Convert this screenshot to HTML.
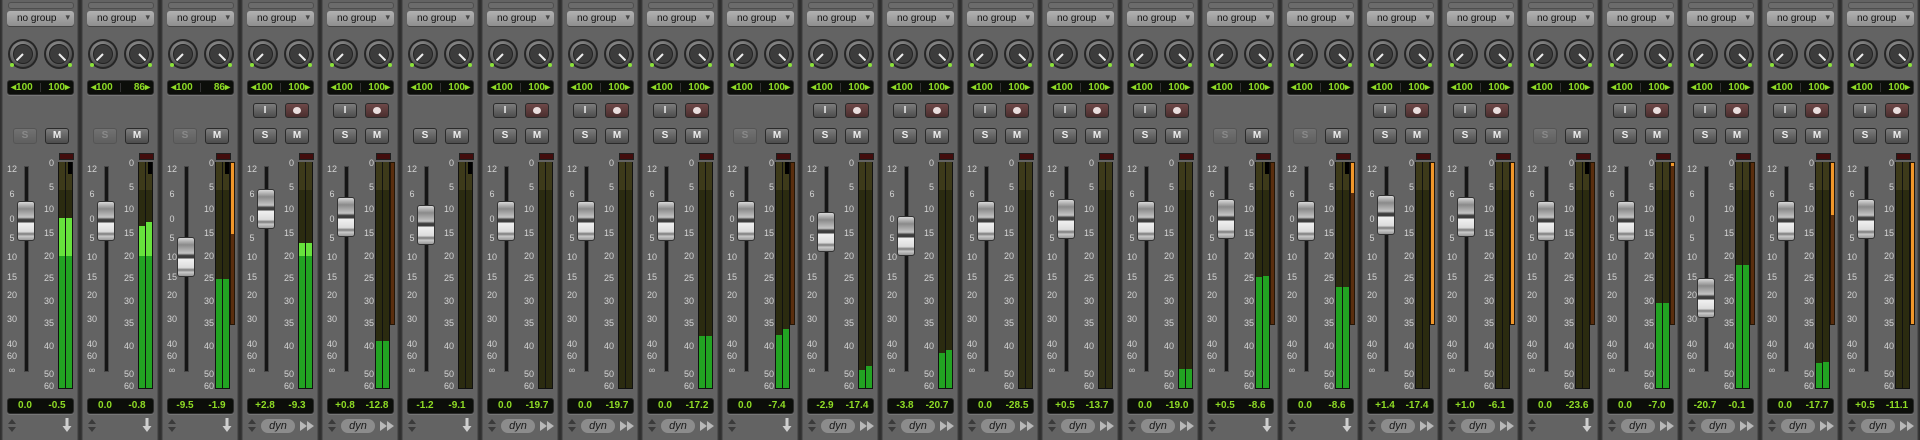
<!DOCTYPE html>
<html><head><meta charset="utf-8"><style>
body{margin:0;width:1920px;height:440px;background:#333;position:relative;overflow:hidden;font-family:"Liberation Sans",sans-serif}
.s{position:absolute;top:0;width:80px;height:440px;background:linear-gradient(to right,#2c2c2c 0,#3c3c3c 2px,#636363 3px,#636363 77px,#3c3c3c 78px,#2c2c2c 80px)}
.s *{position:absolute;display:block;text-decoration:none}
.tb{left:8px;top:2px;width:64px;height:5px;background:#6b6b6b;border:1px solid #4e4e4e;border-radius:3px}
.g{left:7px;top:11px;width:67px;height:15px;background:linear-gradient(#b2b2b2,#8e8e8e);border-radius:3px;font-size:10px;line-height:15px;color:#111;text-indent:10px;box-shadow:0 1px 0 #444}
.g span{right:4px;top:-1px;font-size:9px;color:#444;text-indent:0}
.k1{left:5px;top:36px;width:36px;height:36px}.k2{left:41px;top:36px;width:36px;height:36px}
.pd,.bd{left:7px;width:65px;height:13px;background:#0c0e0a;border:1px solid #2c2c2c;border-radius:3px;color:#8fdc25;font-size:10px;font-weight:bold;line-height:13px;box-shadow:0 1px 0 #777}
.pd{top:80px}.bd{top:398px;height:14px;line-height:14px}
.pd .pl{left:3px;top:0}.pd .pr{right:3px;top:0}.pd i{left:32px;top:2px;width:1px;height:9px;background:#333}
.bd .pl{left:0;top:0;width:34px;text-align:center}.bd .pr{left:33px;top:0;width:32px;text-align:center}
.bt{width:22px;height:13px;border:1px solid #2a2a2a;border-radius:3px;background:linear-gradient(#7c7c7c,#4c4c4c);color:#eee;font-size:10px;font-weight:bold;text-align:center;line-height:13px}
.bi{left:13px;top:103px}.br{left:45px;top:103px;background:linear-gradient(#6e4848,#4a2e2e)}
.br i{left:7px;top:3px;width:8px;height:7px;border-radius:50%;background:#eadede}
.bs{left:13px;top:128px;height:14px;line-height:14px}.bm{left:45px;top:128px;height:14px;line-height:14px}
.dm{background:linear-gradient(#727272,#5f5f5f);color:#8a8a8a;border-color:#555}
.ls b,.ms b{font-size:9px;color:#d4d4d4;font-weight:normal;height:10px;line-height:10px}
.ls b{left:5px;width:14px;text-align:center}
.ms b{left:36px;width:18px;text-align:right}
.ls b:nth-child(1){top:164px}.ls b:nth-child(2){top:189px}.ls b:nth-child(3){top:214px}.ls b:nth-child(4){top:233px}.ls b:nth-child(5){top:252px}.ls b:nth-child(6){top:272px}.ls b:nth-child(7){top:290px}.ls b:nth-child(8){top:314px}.ls b:nth-child(9){top:339px}.ls b:nth-child(10){top:351px}.ls b:nth-child(11){top:365px}
.ms b:nth-child(1){top:158px}.ms b:nth-child(2){top:182px}.ms b:nth-child(3){top:204px}.ms b:nth-child(4){top:228px}.ms b:nth-child(5){top:251px}.ms b:nth-child(6){top:273px}.ms b:nth-child(7){top:296px}.ms b:nth-child(8){top:318px}.ms b:nth-child(9){top:341px}.ms b:nth-child(10){top:369px}.ms b:nth-child(11){top:381px}
.tr{left:24px;top:166px;width:3px;height:204px;background:#151515;border:1px solid #474747}
.cap{left:17px;width:16px;height:38px;border:1px solid #333;border-radius:3px;background:linear-gradient(#d8d8d8,#8a8a8a 18%,#c4c4c4 40%,#3e3e3e 46%,#3e3e3e 52%,#f0f0f0 56%,#dcdcdc 78%,#7a7a7a 84%,#c8c8c8 90%,#999 100%)}
.cl{left:59px;top:153px;width:13px;height:5px;background:#420d0d;border:1px solid #1e1e1e}
.t .cl{left:56px}
.ch{top:162px;height:226px;width:6px;background:linear-gradient(#3d3a1a 0,#3d3a1a 28px,#2b2b10 28px);border-left:1px solid #111;border-bottom:1px solid #111;overflow:hidden}
.a{left:58px}.b{left:65px;border-right:1px solid #111}
.t .a{left:55px}.t .b{left:62px}
.ch u{left:0;right:0;bottom:0;background:#22a322}
.ch s{right:0;top:0;width:4px;height:12px;background:#000}
.oc{left:70px;top:162px;width:3px;height:161px;border:1px solid #241606;background:#5a2e0e}
.up{left:8px;top:419px;width:0;height:0;border-left:4px solid transparent;border-right:4px solid transparent;border-bottom:5px solid #3a3a3a}
.dn{left:8px;top:427px;width:0;height:0;border-left:4px solid transparent;border-right:4px solid transparent;border-top:5px solid #3a3a3a}
.ar{left:62px;top:417px;width:10px;height:16px}
.dy{left:21px;top:419px;width:34px;height:14px;border-radius:7px;background:#8c8c8c;color:#1a1a1a;font-size:11px;line-height:14px;text-align:center}
.ff{left:60px;top:421px;width:14px;height:10px}
</style></head><body>
<svg width="0" height="0" style="position:absolute">
<defs>
<radialGradient id="kg" cx="40%" cy="30%" r="70%"><stop offset="0" stop-color="#9a9a9a"/><stop offset="1" stop-color="#4a4a4a"/></radialGradient>
<symbol id="kn" viewBox="0 0 36 36"><circle cx="18" cy="18" r="15" fill="#262626"/><circle cx="18" cy="18" r="13" fill="url(#kg)"/><circle cx="18" cy="18" r="9.5" fill="#3c3c3c" stroke="#222"/><line x1="18" y1="18" x2="11.5" y2="24.5" stroke="#eee" stroke-width="2"/><circle cx="7" cy="29" r="2" fill="#8be33a"/></symbol>
<symbol id="kr" viewBox="0 0 36 36"><circle cx="18" cy="18" r="15" fill="#262626"/><circle cx="18" cy="18" r="13" fill="url(#kg)"/><circle cx="18" cy="18" r="9.5" fill="#3c3c3c" stroke="#222"/><line x1="18" y1="18" x2="24.5" y2="24.5" stroke="#eee" stroke-width="2"/><circle cx="29" cy="29" r="2" fill="#8be33a"/></symbol>
<symbol id="da" viewBox="0 0 10 16"><path d="M3.5 1h3v8h3L5 15 .5 9h3z" fill="#cfcfcf"/></symbol>
<symbol id="fw" viewBox="0 0 14 10"><path d="M0 0l7 5-7 5zM7 0l7 5-7 5z" fill="#b8b8b8"/></symbol>
</defs></svg>

<!-- 1 -->
<div class="s" style="left:0px"><i class="tb"></i><div class="g">no group<span>▾</span></div><svg class="k1"><use href="#kn"/></svg><svg class="k2"><use href="#kr"/></svg><div class="pd"><span class="pl">◂100</span><i></i><span class="pr">100▸</span></div><div class="bt bs dm">S</div><div class="bt bm">M</div><div class="ls"><b>12</b><b>6</b><b>0</b><b>5</b><b>10</b><b>15</b><b>20</b><b>30</b><b>40</b><b>60</b><b>∞</b></div><div class="ms"><b>0</b><b>5</b><b>10</b><b>15</b><b>20</b><b>25</b><b>30</b><b>35</b><b>40</b><b>50</b><b>60</b></div><i class="tr"></i><i class="cap" style="top:201px"></i><i class="cl"></i><i class="ch a"><u style="top:56px;background:linear-gradient(#66e23c 0 38px,#22a322 38px)"></u></i><i class="ch b"><u style="top:56px;background:linear-gradient(#66e23c 0 38px,#22a322 38px)"></u><s></s></i><div class="bd"><span class="pl">0.0</span><span class="pr">-0.5</span></div><i class="up"></i><i class="dn"></i><svg class="ar"><use href="#da"/></svg></div>
<!-- 2 -->
<div class="s" style="left:80px"><i class="tb"></i><div class="g">no group<span>▾</span></div><svg class="k1"><use href="#kn"/></svg><svg class="k2"><use href="#kr"/></svg><div class="pd"><span class="pl">◂100</span><i></i><span class="pr">86▸</span></div><div class="bt bs dm">S</div><div class="bt bm">M</div><div class="ls"><b>12</b><b>6</b><b>0</b><b>5</b><b>10</b><b>15</b><b>20</b><b>30</b><b>40</b><b>60</b><b>∞</b></div><div class="ms"><b>0</b><b>5</b><b>10</b><b>15</b><b>20</b><b>25</b><b>30</b><b>35</b><b>40</b><b>50</b><b>60</b></div><i class="tr"></i><i class="cap" style="top:201px"></i><i class="cl"></i><i class="ch a"><u style="top:64px;background:linear-gradient(#66e23c 0 30px,#22a322 30px)"></u></i><i class="ch b"><u style="top:60px;background:linear-gradient(#66e23c 0 34px,#22a322 34px)"></u><s></s></i><div class="bd"><span class="pl">0.0</span><span class="pr">-0.8</span></div><i class="up"></i><i class="dn"></i><svg class="ar"><use href="#da"/></svg></div>
<!-- 3 -->
<div class="s t" style="left:160px"><i class="tb"></i><div class="g">no group<span>▾</span></div><svg class="k1"><use href="#kn"/></svg><svg class="k2"><use href="#kr"/></svg><div class="pd"><span class="pl">◂100</span><i></i><span class="pr">86▸</span></div><div class="bt bs dm">S</div><div class="bt bm">M</div><div class="ls"><b>12</b><b>6</b><b>0</b><b>5</b><b>10</b><b>15</b><b>20</b><b>30</b><b>40</b><b>60</b><b>∞</b></div><div class="ms"><b>0</b><b>5</b><b>10</b><b>15</b><b>20</b><b>25</b><b>30</b><b>35</b><b>40</b><b>50</b><b>60</b></div><i class="tr"></i><i class="cap" style="top:237px"></i><i class="cl"></i><i class="ch a"><u style="top:117px"></u></i><i class="ch b"><u style="top:117px"></u><s></s></i><i class="oc" style="background:linear-gradient(#f0962a 0 71px,#5a2e0e 71px)"></i><div class="bd"><span class="pl">-9.5</span><span class="pr">-1.9</span></div><i class="up"></i><i class="dn"></i><svg class="ar"><use href="#da"/></svg></div>
<!-- 4 -->
<div class="s" style="left:240px"><i class="tb"></i><div class="g">no group<span>▾</span></div><svg class="k1"><use href="#kn"/></svg><svg class="k2"><use href="#kr"/></svg><div class="pd"><span class="pl">◂100</span><i></i><span class="pr">100▸</span></div><div class="bt bi">I</div><div class="bt br"><i></i></div><div class="bt bs">S</div><div class="bt bm">M</div><div class="ls"><b>12</b><b>6</b><b>0</b><b>5</b><b>10</b><b>15</b><b>20</b><b>30</b><b>40</b><b>60</b><b>∞</b></div><div class="ms"><b>0</b><b>5</b><b>10</b><b>15</b><b>20</b><b>25</b><b>30</b><b>35</b><b>40</b><b>50</b><b>60</b></div><i class="tr"></i><i class="cap" style="top:189px"></i><i class="cl"></i><i class="ch a"><u style="top:81px;background:linear-gradient(#66e23c 0 13px,#22a322 13px)"></u></i><i class="ch b"><u style="top:81px;background:linear-gradient(#66e23c 0 13px,#22a322 13px)"></u></i><div class="bd"><span class="pl">+2.8</span><span class="pr">-9.3</span></div><i class="up"></i><i class="dn"></i><i class="dy">dyn</i><svg class="ff"><use href="#fw"/></svg></div>
<!-- 5 -->
<div class="s t" style="left:320px"><i class="tb"></i><div class="g">no group<span>▾</span></div><svg class="k1"><use href="#kn"/></svg><svg class="k2"><use href="#kr"/></svg><div class="pd"><span class="pl">◂100</span><i></i><span class="pr">100▸</span></div><div class="bt bi">I</div><div class="bt br"><i></i></div><div class="bt bs">S</div><div class="bt bm">M</div><div class="ls"><b>12</b><b>6</b><b>0</b><b>5</b><b>10</b><b>15</b><b>20</b><b>30</b><b>40</b><b>60</b><b>∞</b></div><div class="ms"><b>0</b><b>5</b><b>10</b><b>15</b><b>20</b><b>25</b><b>30</b><b>35</b><b>40</b><b>50</b><b>60</b></div><i class="tr"></i><i class="cap" style="top:197px"></i><i class="cl"></i><i class="ch a"><u style="top:179px"></u></i><i class="ch b"><u style="top:179px"></u></i><i class="oc"></i><div class="bd"><span class="pl">+0.8</span><span class="pr">-12.8</span></div><i class="up"></i><i class="dn"></i><i class="dy">dyn</i><svg class="ff"><use href="#fw"/></svg></div>
<!-- 6 -->
<div class="s" style="left:400px"><i class="tb"></i><div class="g">no group<span>▾</span></div><svg class="k1"><use href="#kn"/></svg><svg class="k2"><use href="#kr"/></svg><div class="pd"><span class="pl">◂100</span><i></i><span class="pr">100▸</span></div><div class="bt bs">S</div><div class="bt bm">M</div><div class="ls"><b>12</b><b>6</b><b>0</b><b>5</b><b>10</b><b>15</b><b>20</b><b>30</b><b>40</b><b>60</b><b>∞</b></div><div class="ms"><b>0</b><b>5</b><b>10</b><b>15</b><b>20</b><b>25</b><b>30</b><b>35</b><b>40</b><b>50</b><b>60</b></div><i class="tr"></i><i class="cap" style="top:205px"></i><i class="cl"></i><i class="ch a"></i><i class="ch b"><s></s></i><div class="bd"><span class="pl">-1.2</span><span class="pr">-9.1</span></div><i class="up"></i><i class="dn"></i><svg class="ar"><use href="#da"/></svg></div>
<!-- 7 -->
<div class="s" style="left:480px"><i class="tb"></i><div class="g">no group<span>▾</span></div><svg class="k1"><use href="#kn"/></svg><svg class="k2"><use href="#kr"/></svg><div class="pd"><span class="pl">◂100</span><i></i><span class="pr">100▸</span></div><div class="bt bi">I</div><div class="bt br"><i></i></div><div class="bt bs">S</div><div class="bt bm">M</div><div class="ls"><b>12</b><b>6</b><b>0</b><b>5</b><b>10</b><b>15</b><b>20</b><b>30</b><b>40</b><b>60</b><b>∞</b></div><div class="ms"><b>0</b><b>5</b><b>10</b><b>15</b><b>20</b><b>25</b><b>30</b><b>35</b><b>40</b><b>50</b><b>60</b></div><i class="tr"></i><i class="cap" style="top:201px"></i><i class="cl"></i><i class="ch a"></i><i class="ch b"></i><div class="bd"><span class="pl">0.0</span><span class="pr">-19.7</span></div><i class="up"></i><i class="dn"></i><i class="dy">dyn</i><svg class="ff"><use href="#fw"/></svg></div>
<!-- 8 -->
<div class="s" style="left:560px"><i class="tb"></i><div class="g">no group<span>▾</span></div><svg class="k1"><use href="#kn"/></svg><svg class="k2"><use href="#kr"/></svg><div class="pd"><span class="pl">◂100</span><i></i><span class="pr">100▸</span></div><div class="bt bi">I</div><div class="bt br"><i></i></div><div class="bt bs">S</div><div class="bt bm">M</div><div class="ls"><b>12</b><b>6</b><b>0</b><b>5</b><b>10</b><b>15</b><b>20</b><b>30</b><b>40</b><b>60</b><b>∞</b></div><div class="ms"><b>0</b><b>5</b><b>10</b><b>15</b><b>20</b><b>25</b><b>30</b><b>35</b><b>40</b><b>50</b><b>60</b></div><i class="tr"></i><i class="cap" style="top:201px"></i><i class="cl"></i><i class="ch a"></i><i class="ch b"></i><div class="bd"><span class="pl">0.0</span><span class="pr">-19.7</span></div><i class="up"></i><i class="dn"></i><i class="dy">dyn</i><svg class="ff"><use href="#fw"/></svg></div>
<!-- 9 -->
<div class="s" style="left:640px"><i class="tb"></i><div class="g">no group<span>▾</span></div><svg class="k1"><use href="#kn"/></svg><svg class="k2"><use href="#kr"/></svg><div class="pd"><span class="pl">◂100</span><i></i><span class="pr">100▸</span></div><div class="bt bi">I</div><div class="bt br"><i></i></div><div class="bt bs">S</div><div class="bt bm">M</div><div class="ls"><b>12</b><b>6</b><b>0</b><b>5</b><b>10</b><b>15</b><b>20</b><b>30</b><b>40</b><b>60</b><b>∞</b></div><div class="ms"><b>0</b><b>5</b><b>10</b><b>15</b><b>20</b><b>25</b><b>30</b><b>35</b><b>40</b><b>50</b><b>60</b></div><i class="tr"></i><i class="cap" style="top:201px"></i><i class="cl"></i><i class="ch a"><u style="top:174px"></u></i><i class="ch b"><u style="top:174px"></u></i><div class="bd"><span class="pl">0.0</span><span class="pr">-17.2</span></div><i class="up"></i><i class="dn"></i><i class="dy">dyn</i><svg class="ff"><use href="#fw"/></svg></div>
<!-- 10 -->
<div class="s t" style="left:720px"><i class="tb"></i><div class="g">no group<span>▾</span></div><svg class="k1"><use href="#kn"/></svg><svg class="k2"><use href="#kr"/></svg><div class="pd"><span class="pl">◂100</span><i></i><span class="pr">100▸</span></div><div class="bt bs dm">S</div><div class="bt bm">M</div><div class="ls"><b>12</b><b>6</b><b>0</b><b>5</b><b>10</b><b>15</b><b>20</b><b>30</b><b>40</b><b>60</b><b>∞</b></div><div class="ms"><b>0</b><b>5</b><b>10</b><b>15</b><b>20</b><b>25</b><b>30</b><b>35</b><b>40</b><b>50</b><b>60</b></div><i class="tr"></i><i class="cap" style="top:201px"></i><i class="cl"></i><i class="ch a"><u style="top:173px"></u></i><i class="ch b"><u style="top:167px"></u><s></s></i><i class="oc"></i><div class="bd"><span class="pl">0.0</span><span class="pr">-7.4</span></div><i class="up"></i><i class="dn"></i><svg class="ar"><use href="#da"/></svg></div>
<!-- 11 -->
<div class="s" style="left:800px"><i class="tb"></i><div class="g">no group<span>▾</span></div><svg class="k1"><use href="#kn"/></svg><svg class="k2"><use href="#kr"/></svg><div class="pd"><span class="pl">◂100</span><i></i><span class="pr">100▸</span></div><div class="bt bi">I</div><div class="bt br"><i></i></div><div class="bt bs">S</div><div class="bt bm">M</div><div class="ls"><b>12</b><b>6</b><b>0</b><b>5</b><b>10</b><b>15</b><b>20</b><b>30</b><b>40</b><b>60</b><b>∞</b></div><div class="ms"><b>0</b><b>5</b><b>10</b><b>15</b><b>20</b><b>25</b><b>30</b><b>35</b><b>40</b><b>50</b><b>60</b></div><i class="tr"></i><i class="cap" style="top:212px"></i><i class="cl"></i><i class="ch a"><u style="top:208px"></u></i><i class="ch b"><u style="top:204px"></u></i><div class="bd"><span class="pl">-2.9</span><span class="pr">-17.4</span></div><i class="up"></i><i class="dn"></i><i class="dy">dyn</i><svg class="ff"><use href="#fw"/></svg></div>
<!-- 12 -->
<div class="s" style="left:880px"><i class="tb"></i><div class="g">no group<span>▾</span></div><svg class="k1"><use href="#kn"/></svg><svg class="k2"><use href="#kr"/></svg><div class="pd"><span class="pl">◂100</span><i></i><span class="pr">100▸</span></div><div class="bt bi">I</div><div class="bt br"><i></i></div><div class="bt bs">S</div><div class="bt bm">M</div><div class="ls"><b>12</b><b>6</b><b>0</b><b>5</b><b>10</b><b>15</b><b>20</b><b>30</b><b>40</b><b>60</b><b>∞</b></div><div class="ms"><b>0</b><b>5</b><b>10</b><b>15</b><b>20</b><b>25</b><b>30</b><b>35</b><b>40</b><b>50</b><b>60</b></div><i class="tr"></i><i class="cap" style="top:216px"></i><i class="cl"></i><i class="ch a"><u style="top:191px"></u></i><i class="ch b"><u style="top:188px"></u></i><div class="bd"><span class="pl">-3.8</span><span class="pr">-20.7</span></div><i class="up"></i><i class="dn"></i><i class="dy">dyn</i><svg class="ff"><use href="#fw"/></svg></div>
<!-- 13 -->
<div class="s" style="left:960px"><i class="tb"></i><div class="g">no group<span>▾</span></div><svg class="k1"><use href="#kn"/></svg><svg class="k2"><use href="#kr"/></svg><div class="pd"><span class="pl">◂100</span><i></i><span class="pr">100▸</span></div><div class="bt bi">I</div><div class="bt br"><i></i></div><div class="bt bs">S</div><div class="bt bm">M</div><div class="ls"><b>12</b><b>6</b><b>0</b><b>5</b><b>10</b><b>15</b><b>20</b><b>30</b><b>40</b><b>60</b><b>∞</b></div><div class="ms"><b>0</b><b>5</b><b>10</b><b>15</b><b>20</b><b>25</b><b>30</b><b>35</b><b>40</b><b>50</b><b>60</b></div><i class="tr"></i><i class="cap" style="top:201px"></i><i class="cl"></i><i class="ch a"></i><i class="ch b"></i><div class="bd"><span class="pl">0.0</span><span class="pr">-28.5</span></div><i class="up"></i><i class="dn"></i><i class="dy">dyn</i><svg class="ff"><use href="#fw"/></svg></div>
<!-- 14 -->
<div class="s" style="left:1040px"><i class="tb"></i><div class="g">no group<span>▾</span></div><svg class="k1"><use href="#kn"/></svg><svg class="k2"><use href="#kr"/></svg><div class="pd"><span class="pl">◂100</span><i></i><span class="pr">100▸</span></div><div class="bt bi">I</div><div class="bt br"><i></i></div><div class="bt bs">S</div><div class="bt bm">M</div><div class="ls"><b>12</b><b>6</b><b>0</b><b>5</b><b>10</b><b>15</b><b>20</b><b>30</b><b>40</b><b>60</b><b>∞</b></div><div class="ms"><b>0</b><b>5</b><b>10</b><b>15</b><b>20</b><b>25</b><b>30</b><b>35</b><b>40</b><b>50</b><b>60</b></div><i class="tr"></i><i class="cap" style="top:199px"></i><i class="cl"></i><i class="ch a"></i><i class="ch b"></i><div class="bd"><span class="pl">+0.5</span><span class="pr">-13.7</span></div><i class="up"></i><i class="dn"></i><i class="dy">dyn</i><svg class="ff"><use href="#fw"/></svg></div>
<!-- 15 -->
<div class="s" style="left:1120px"><i class="tb"></i><div class="g">no group<span>▾</span></div><svg class="k1"><use href="#kn"/></svg><svg class="k2"><use href="#kr"/></svg><div class="pd"><span class="pl">◂100</span><i></i><span class="pr">100▸</span></div><div class="bt bi">I</div><div class="bt br"><i></i></div><div class="bt bs">S</div><div class="bt bm">M</div><div class="ls"><b>12</b><b>6</b><b>0</b><b>5</b><b>10</b><b>15</b><b>20</b><b>30</b><b>40</b><b>60</b><b>∞</b></div><div class="ms"><b>0</b><b>5</b><b>10</b><b>15</b><b>20</b><b>25</b><b>30</b><b>35</b><b>40</b><b>50</b><b>60</b></div><i class="tr"></i><i class="cap" style="top:201px"></i><i class="cl"></i><i class="ch a"><u style="top:207px"></u></i><i class="ch b"><u style="top:207px"></u></i><div class="bd"><span class="pl">0.0</span><span class="pr">-19.0</span></div><i class="up"></i><i class="dn"></i><i class="dy">dyn</i><svg class="ff"><use href="#fw"/></svg></div>
<!-- 16 -->
<div class="s t" style="left:1200px"><i class="tb"></i><div class="g">no group<span>▾</span></div><svg class="k1"><use href="#kn"/></svg><svg class="k2"><use href="#kr"/></svg><div class="pd"><span class="pl">◂100</span><i></i><span class="pr">100▸</span></div><div class="bt bs dm">S</div><div class="bt bm">M</div><div class="ls"><b>12</b><b>6</b><b>0</b><b>5</b><b>10</b><b>15</b><b>20</b><b>30</b><b>40</b><b>60</b><b>∞</b></div><div class="ms"><b>0</b><b>5</b><b>10</b><b>15</b><b>20</b><b>25</b><b>30</b><b>35</b><b>40</b><b>50</b><b>60</b></div><i class="tr"></i><i class="cap" style="top:199px"></i><i class="cl"></i><i class="ch a"><u style="top:115px"></u></i><i class="ch b"><u style="top:114px"></u><s></s></i><i class="oc"></i><div class="bd"><span class="pl">+0.5</span><span class="pr">-8.6</span></div><i class="up"></i><i class="dn"></i><svg class="ar"><use href="#da"/></svg></div>
<!-- 17 -->
<div class="s t" style="left:1280px"><i class="tb"></i><div class="g">no group<span>▾</span></div><svg class="k1"><use href="#kn"/></svg><svg class="k2"><use href="#kr"/></svg><div class="pd"><span class="pl">◂100</span><i></i><span class="pr">100▸</span></div><div class="bt bs dm">S</div><div class="bt bm">M</div><div class="ls"><b>12</b><b>6</b><b>0</b><b>5</b><b>10</b><b>15</b><b>20</b><b>30</b><b>40</b><b>60</b><b>∞</b></div><div class="ms"><b>0</b><b>5</b><b>10</b><b>15</b><b>20</b><b>25</b><b>30</b><b>35</b><b>40</b><b>50</b><b>60</b></div><i class="tr"></i><i class="cap" style="top:201px"></i><i class="cl"></i><i class="ch a"><u style="top:125px"></u></i><i class="ch b"><u style="top:125px"></u><s></s></i><i class="oc" style="background:linear-gradient(#f0962a 0 30px,#5a2e0e 30px)"></i><div class="bd"><span class="pl">0.0</span><span class="pr">-8.6</span></div><i class="up"></i><i class="dn"></i><svg class="ar"><use href="#da"/></svg></div>
<!-- 18 -->
<div class="s t" style="left:1360px"><i class="tb"></i><div class="g">no group<span>▾</span></div><svg class="k1"><use href="#kn"/></svg><svg class="k2"><use href="#kr"/></svg><div class="pd"><span class="pl">◂100</span><i></i><span class="pr">100▸</span></div><div class="bt bi">I</div><div class="bt br"><i></i></div><div class="bt bs">S</div><div class="bt bm">M</div><div class="ls"><b>12</b><b>6</b><b>0</b><b>5</b><b>10</b><b>15</b><b>20</b><b>30</b><b>40</b><b>60</b><b>∞</b></div><div class="ms"><b>0</b><b>5</b><b>10</b><b>15</b><b>20</b><b>25</b><b>30</b><b>35</b><b>40</b><b>50</b><b>60</b></div><i class="tr"></i><i class="cap" style="top:195px"></i><i class="cl"></i><i class="ch a"></i><i class="ch b"></i><i class="oc" style="background:#f0962a"></i><div class="bd"><span class="pl">+1.4</span><span class="pr">-17.4</span></div><i class="up"></i><i class="dn"></i><i class="dy">dyn</i><svg class="ff"><use href="#fw"/></svg></div>
<!-- 19 -->
<div class="s t" style="left:1440px"><i class="tb"></i><div class="g">no group<span>▾</span></div><svg class="k1"><use href="#kn"/></svg><svg class="k2"><use href="#kr"/></svg><div class="pd"><span class="pl">◂100</span><i></i><span class="pr">100▸</span></div><div class="bt bi">I</div><div class="bt br"><i></i></div><div class="bt bs">S</div><div class="bt bm">M</div><div class="ls"><b>12</b><b>6</b><b>0</b><b>5</b><b>10</b><b>15</b><b>20</b><b>30</b><b>40</b><b>60</b><b>∞</b></div><div class="ms"><b>0</b><b>5</b><b>10</b><b>15</b><b>20</b><b>25</b><b>30</b><b>35</b><b>40</b><b>50</b><b>60</b></div><i class="tr"></i><i class="cap" style="top:197px"></i><i class="cl"></i><i class="ch a"></i><i class="ch b"></i><i class="oc" style="background:#f0962a"></i><div class="bd"><span class="pl">+1.0</span><span class="pr">-6.1</span></div><i class="up"></i><i class="dn"></i><i class="dy">dyn</i><svg class="ff"><use href="#fw"/></svg></div>
<!-- 20 -->
<div class="s t" style="left:1520px"><i class="tb"></i><div class="g">no group<span>▾</span></div><svg class="k1"><use href="#kn"/></svg><svg class="k2"><use href="#kr"/></svg><div class="pd"><span class="pl">◂100</span><i></i><span class="pr">100▸</span></div><div class="bt bs dm">S</div><div class="bt bm">M</div><div class="ls"><b>12</b><b>6</b><b>0</b><b>5</b><b>10</b><b>15</b><b>20</b><b>30</b><b>40</b><b>60</b><b>∞</b></div><div class="ms"><b>0</b><b>5</b><b>10</b><b>15</b><b>20</b><b>25</b><b>30</b><b>35</b><b>40</b><b>50</b><b>60</b></div><i class="tr"></i><i class="cap" style="top:201px"></i><i class="cl"></i><i class="ch a"></i><i class="ch b"><s></s></i><i class="oc"></i><div class="bd"><span class="pl">0.0</span><span class="pr">-23.6</span></div><i class="up"></i><i class="dn"></i><svg class="ar"><use href="#da"/></svg></div>
<!-- 21 -->
<div class="s t" style="left:1600px"><i class="tb"></i><div class="g">no group<span>▾</span></div><svg class="k1"><use href="#kn"/></svg><svg class="k2"><use href="#kr"/></svg><div class="pd"><span class="pl">◂100</span><i></i><span class="pr">100▸</span></div><div class="bt bi">I</div><div class="bt br"><i></i></div><div class="bt bs">S</div><div class="bt bm">M</div><div class="ls"><b>12</b><b>6</b><b>0</b><b>5</b><b>10</b><b>15</b><b>20</b><b>30</b><b>40</b><b>60</b><b>∞</b></div><div class="ms"><b>0</b><b>5</b><b>10</b><b>15</b><b>20</b><b>25</b><b>30</b><b>35</b><b>40</b><b>50</b><b>60</b></div><i class="tr"></i><i class="cap" style="top:201px"></i><i class="cl"></i><i class="ch a"><u style="top:141px"></u></i><i class="ch b"><u style="top:141px"></u></i><i class="oc" style="background:linear-gradient(#f0962a 0 3px,#5a2e0e 3px)"></i><div class="bd"><span class="pl">0.0</span><span class="pr">-7.0</span></div><i class="up"></i><i class="dn"></i><i class="dy">dyn</i><svg class="ff"><use href="#fw"/></svg></div>
<!-- 22 -->
<div class="s t" style="left:1680px"><i class="tb"></i><div class="g">no group<span>▾</span></div><svg class="k1"><use href="#kn"/></svg><svg class="k2"><use href="#kr"/></svg><div class="pd"><span class="pl">◂100</span><i></i><span class="pr">100▸</span></div><div class="bt bi">I</div><div class="bt br"><i></i></div><div class="bt bs">S</div><div class="bt bm">M</div><div class="ls"><b>12</b><b>6</b><b>0</b><b>5</b><b>10</b><b>15</b><b>20</b><b>30</b><b>40</b><b>60</b><b>∞</b></div><div class="ms"><b>0</b><b>5</b><b>10</b><b>15</b><b>20</b><b>25</b><b>30</b><b>35</b><b>40</b><b>50</b><b>60</b></div><i class="tr"></i><i class="cap" style="top:278px"></i><i class="cl"></i><i class="ch a"><u style="top:103px"></u></i><i class="ch b"><u style="top:103px"></u></i><i class="oc"></i><div class="bd"><span class="pl">-20.7</span><span class="pr">-0.1</span></div><i class="up"></i><i class="dn"></i><i class="dy">dyn</i><svg class="ff"><use href="#fw"/></svg></div>
<!-- 23 -->
<div class="s t" style="left:1760px"><i class="tb"></i><div class="g">no group<span>▾</span></div><svg class="k1"><use href="#kn"/></svg><svg class="k2"><use href="#kr"/></svg><div class="pd"><span class="pl">◂100</span><i></i><span class="pr">100▸</span></div><div class="bt bi">I</div><div class="bt br"><i></i></div><div class="bt bs">S</div><div class="bt bm">M</div><div class="ls"><b>12</b><b>6</b><b>0</b><b>5</b><b>10</b><b>15</b><b>20</b><b>30</b><b>40</b><b>60</b><b>∞</b></div><div class="ms"><b>0</b><b>5</b><b>10</b><b>15</b><b>20</b><b>25</b><b>30</b><b>35</b><b>40</b><b>50</b><b>60</b></div><i class="tr"></i><i class="cap" style="top:201px"></i><i class="cl"></i><i class="ch a"><u style="top:201px"></u></i><i class="ch b"><u style="top:200px"></u></i><i class="oc" style="background:linear-gradient(#f0962a 0 52px,#5a2e0e 52px)"></i><div class="bd"><span class="pl">0.0</span><span class="pr">-17.7</span></div><i class="up"></i><i class="dn"></i><i class="dy">dyn</i><svg class="ff"><use href="#fw"/></svg></div>
<!-- 24 -->
<div class="s t" style="left:1840px"><i class="tb"></i><div class="g">no group<span>▾</span></div><svg class="k1"><use href="#kn"/></svg><svg class="k2"><use href="#kr"/></svg><div class="pd"><span class="pl">◂100</span><i></i><span class="pr">100▸</span></div><div class="bt bi">I</div><div class="bt br"><i></i></div><div class="bt bs">S</div><div class="bt bm">M</div><div class="ls"><b>12</b><b>6</b><b>0</b><b>5</b><b>10</b><b>15</b><b>20</b><b>30</b><b>40</b><b>60</b><b>∞</b></div><div class="ms"><b>0</b><b>5</b><b>10</b><b>15</b><b>20</b><b>25</b><b>30</b><b>35</b><b>40</b><b>50</b><b>60</b></div><i class="tr"></i><i class="cap" style="top:199px"></i><i class="cl"></i><i class="ch a"></i><i class="ch b"></i><i class="oc" style="background:#f0962a"></i><div class="bd"><span class="pl">+0.5</span><span class="pr">-11.1</span></div><i class="up"></i><i class="dn"></i><i class="dy">dyn</i><svg class="ff"><use href="#fw"/></svg></div>
</body></html>
